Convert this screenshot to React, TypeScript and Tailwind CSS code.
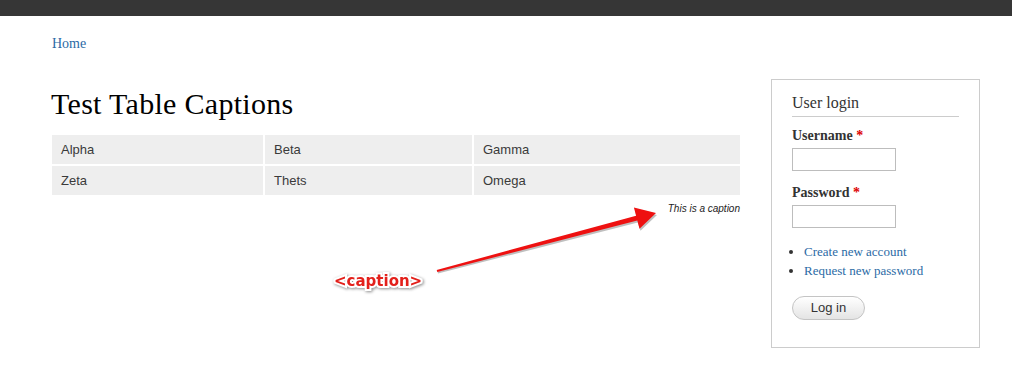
import React from "react";

const serif = "font-['Liberation_Serif',Georgia,serif]";
const sans = "font-['Liberation_Sans',Helvetica,Arial,sans-serif]";

const rows = [
  ["Alpha", "Beta", "Gamma"],
  ["Zeta", "Thets", "Omega"],
];

function LoginBlock() {
  return (
    <aside className={`${serif} ml-[31px] w-[209px] shrink-0 border border-[#cccccc] px-5 pt-[13px] pb-[27px] text-[#333]`}>
      <h2 className="border-b border-[#cccccc] pb-[3px] text-[16px] leading-5 text-[#333]">User login</h2>
      <label className="mt-[10px] block text-[14px] font-bold leading-[18px]">
        Username <span className="text-[#dd0000]">*</span>
      </label>
      <input className="mt-[3px] block h-[23px] w-[104px] border border-[#bdbdbd] bg-white" />
      <label className="mt-[13px] block text-[14px] font-bold leading-[18px]">
        Password <span className="text-[#dd0000]">*</span>
      </label>
      <input type="password" className="mt-[3px] block h-[23px] w-[104px] border border-[#bdbdbd] bg-white" />
      <ul className="mt-[14px] list-disc pl-3 text-[13px] leading-[19px] text-[#2b6aa5] marker:text-[#333]">
        <li>Create new account</li>
        <li>Request new password</li>
      </ul>
      <button className={`${sans} mt-4 block h-6 w-[73px] rounded-full border border-[#c4c4c4] bg-gradient-to-b from-white to-[#e4e4e4] text-[13px] text-[#333]`}>
        Log in
      </button>
    </aside>
  );
}

export default function App() {
  return (
    <div className="relative h-[374px] w-[1012px] overflow-hidden bg-white">
      <div className="h-4 bg-[#363636]" />
      <div className="pl-[52px]">
        <div className={`${serif} pt-[18px] text-[14px] leading-5 text-[#2b6aa5]`}>Home</div>
        <div className="mt-[25px] flex items-start">
          <main className="w-[688px] shrink-0 pt-[7px]">
            <h1 className={`${serif} -ml-px text-[30px] leading-[35px] tracking-[0.3px] text-black`}>Test Table Captions</h1>
            <table className={`${sans} mt-[12px] w-full border-collapse text-[13px] text-[#3a3a3a]`}>
              <caption className="caption-bottom pt-[5px] text-right text-[10px] italic leading-[13px] text-[#222]">
                This is a caption
              </caption>
              <tbody>
                {rows.map((r, i) => (
                  <tr key={i} className="h-[31px] bg-[#eeeeee]">
                    <td className="w-[212px] border-2 border-white border-l-0 px-[9px]">{r[0]}</td>
                    <td className="w-[209px] border-2 border-white px-[9px]">{r[1]}</td>
                    <td className="border-2 border-white border-r-0 px-[9px]">{r[2]}</td>
                  </tr>
                ))}
              </tbody>
            </table>
          </main>
          <LoginBlock />
        </div>
      </div>

      {/* annotation overlay */}
      <svg className="pointer-events-none absolute left-0 top-0" width="1012" height="374">
        <polygon
          points="438,273.5 637.8,222.5 640.5,230.7 657,215 634.9,209.5 636.6,217.7 437.5,271.5"
          fill="rgba(0,0,0,0.25)"
        />
        <polygon
          points="437.3,272 637.3,220.5 639.5,228.7 656,213 633.9,207.5 636.1,215.7 436.7,270"
          fill="#ee1111"
        />
      </svg>
      <div className="absolute left-[334px] top-[271px] font-['DejaVu_Sans',Verdana,sans-serif] text-[15px] font-bold leading-5 text-[#e3201b] [-webkit-text-stroke:4px_white] [paint-order:stroke_fill] drop-shadow-[1px_1px_1.5px_rgba(0,0,0,0.45)]">
        &lt;caption&gt;
      </div>
    </div>
  );
}
